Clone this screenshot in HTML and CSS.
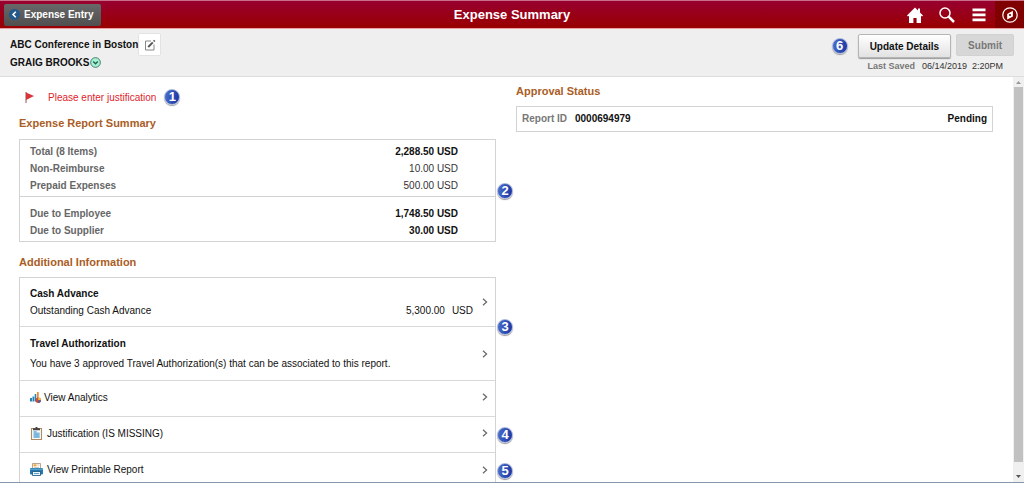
FILE: index.html
```html
<!DOCTYPE html>
<html lang="en">
<head>
<meta charset="utf-8">
<meta name="viewport" content="width=device-width, initial-scale=1">
<title>Expense Summary</title>
<link rel="stylesheet" href="styles.css">
</head>
<body>
<header class="banner">
  <button class="back" type="button">
    <svg class="back-icon" viewBox="0 0 12 12" aria-hidden="true"><circle cx="6" cy="6" r="6" fill="#24588a"/><path d="M7.4 3 4.4 6l3 3" fill="none" stroke="#fff" stroke-width="1.7"/></svg>
    Expense Entry
  </button>
  <h1 class="title">Expense Summary</h1>
  <nav class="tools">
    <button class="tool" type="button" aria-label="Home"><svg class="icon" viewBox="0 0 16 16"><path d="M8 .5 11 3.500V1.500h2v4L16 8.500l-1 1-1-.8V16H9.600v-5H6.400v5H2V8.700l-1 .8-1-1z" fill="#fff"/></svg></button>
    <button class="tool" type="button" aria-label="Search"><svg class="icon" viewBox="0 0 16 16" fill="none" stroke="#fff"><circle cx="6" cy="6" r="5" stroke-width="1.500"/><path d="m9.700 9.700 5.300 5.300" stroke-width="2.500"/></svg></button>
    <button class="tool" type="button" aria-label="Actions"><svg class="icon" viewBox="0 0 16 16"><path d="M1.500 1.500h13v2.700h-13zM1.500 6.500h13v2.700h-13zM1.500 11.500h13v2.700h-13z" fill="#fff"/></svg></button>
    <button class="tool tool-nav" type="button" aria-label="Navigator"><svg class="icon" viewBox="0 0 16 16"><circle cx="8" cy="8" r="7.200" fill="none" stroke="#fff" stroke-width="1.200"/><path d="M10.900 3.800v5.700L5.200 12.400V7z" fill="#fff"/><circle cx="8" cy="8" r="1.100" fill="#800000"/></svg></button>
  </nav>
</header>

<section class="subhead">
  <div class="who">
    <div class="who-row"><strong>ABC Conference in Boston</strong>
      <button class="edit" type="button" aria-label="Edit description"><svg class="edit-icon" viewBox="0 0 12 12" fill="none" stroke="#555"><path d="M7 2H1.500v9h8.500V5.500" stroke="#888"/><path d="m4.200 8 4.600-4.700" stroke-width="1.900"/><path d="m9.700 2.400 1-1" stroke-width="2"/></svg></button>
    </div>
    <div class="who-row who-name"><strong>GRAIG BROOKS</strong>
      <button class="more" type="button" aria-label="Related actions"><svg class="more-icon" viewBox="0 0 12 12"><circle cx="6" cy="6" r="5.300" fill="#a4f2d2" stroke="#3c7565" stroke-width="1"/><path d="M3.500 4.800 6 7.300l2.500-2.500" fill="none" stroke="#245f50" stroke-width="1.500"/></svg></button>
    </div>
  </div>
  <div class="actions">
    <div class="action-row">
      <span class="badge badge-action">6</span>
      <button class="btn" type="button">Update Details</button>
      <button class="btn btn-off" type="button" disabled>Submit</button>
    </div>
    <div class="saved"><span class="saved-label">Last Saved</span><span>06/14/2019&nbsp; 2:20PM</span></div>
  </div>
</section>

<div class="body">
  <main class="content">
    <div class="col">
      <div class="alert"><svg class="flag" viewBox="0 0 9 11"><path d="M1 0v11" stroke="#b07a7a" stroke-width="1.300"/><path d="m1 .5 8 3.600L1 8z" fill="#d8343a"/></svg><a class="alert-link" href="#justify">Please enter justification</a><span class="badge">1</span></div>
      <h2 class="heading heading-summary">Expense Report Summary</h2>
      <div class="panel">
        <dl class="totals">
          <div class="line"><dt>Total (8 Items)</dt><dd class="strong">2,288.50 USD</dd></div>
          <div class="line"><dt>Non-Reimburse</dt><dd>10.00 USD</dd></div>
          <div class="line"><dt>Prepaid Expenses</dt><dd>500.00 USD</dd></div>
        </dl>
        <dl class="totals totals-due">
          <div class="line"><dt>Due to Employee</dt><dd class="strong">1,748.50 USD</dd></div>
          <div class="line"><dt>Due to Supplier</dt><dd class="strong">30.00 USD</dd></div>
        </dl>
        <span class="badge badge-side">2</span>
      </div>

      <h2 class="heading heading-info">Additional Information</h2>
      <div class="panel">
        <a class="item item-cash" href="#cash">
          <span class="item-text"><strong>Cash Advance</strong><span class="amount-line"><span>Outstanding Cash Advance</span><span class="amount">5,300.00 <span>USD</span></span></span></span>
          <svg class="chev" viewBox="0 0 6 8"><path d="m1 .7 3.600 3.300L1 7.300"/></svg>
          <span class="badge badge-edge">3</span>
        </a>
        <a class="item item-travel" href="#travel">
          <span class="item-text item-text-wide"><strong>Travel Authorization</strong><span>You have 3 approved Travel Authorization(s) that can be associated to this report.</span></span>
          <svg class="chev" viewBox="0 0 6 8"><path d="m1 .7 3.600 3.300L1 7.300"/></svg>
        </a>
        <a class="item item-link" href="#analytics">
          <svg class="analytics" viewBox="0 0 11 11"><path d="M0 6h2v3.500H0zM2.500 4.500h1.700v5H2.500zM4.700 2h1.600v7.500H4.700z" fill="#2583ba"/><path d="M7 0h1.700v6H7z" fill="#f08b2b"/><circle cx="8.200" cy="8.200" r="2.700" fill="#c84d36"/><path d="M8.200 8.200V5.500a2.700 2.700 0 0 1 2.700 2.700z" fill="#f5b83d"/><path d="M8.200 8.200h2.700a2.700 2.700 0 0 1-2.700 2.700z" fill="#58569c"/></svg>
          <span>View Analytics</span>
          <svg class="chev" viewBox="0 0 6 8"><path d="m1 .7 3.600 3.300L1 7.300"/></svg>
        </a>
        <a class="item item-link" href="#justify">
          <svg class="doc" viewBox="0 0 13 13"><path d="M1.500 1.500h10v11h-10z" fill="#f7fafc" stroke="#b08a60" stroke-width="1.100"/><path d="M3.500 4h3.200v1.500h3V11H3.500z" fill="#83bce0"/><path d="M4.500 7.300h4M4.500 9.200h4" stroke="#6aa7d2" stroke-width=".6"/><path d="M3 1.200h2.200L5.800 0h1.400l.6 1.200H10v2H3z" fill="#444"/></svg>
          <span>Justification (IS MISSING)</span>
          <svg class="chev" viewBox="0 0 6 8"><path d="m1 .7 3.600 3.300L1 7.300"/></svg>
          <span class="badge badge-side">4</span>
        </a>
        <a class="item item-link" href="#print">
          <svg class="doc" viewBox="0 0 13 13"><path d="M2.500.5h8V6h-8z" fill="#fcfaf3" stroke="#a68d76" stroke-width=".8"/><path d="M3.500 1.300h3v2h-3z" fill="#efa43b"/><path d="M7.300 2h2M4 4.500h5" stroke="#b9b2a9" stroke-width=".7"/><rect y="5" width="13" height="6.500" rx="1" fill="#2478ae"/><path d="M0 6.200h13" stroke="#69b4de"/><path d="M2.500 8.500h8v4h-8z" fill="#e8f4fa" stroke="#174f78" stroke-width=".8"/><path d="M4 10.500h5" stroke="#5ea2cd"/></svg>
          <span>View Printable Report</span>
          <svg class="chev" viewBox="0 0 6 8"><path d="m1 .7 3.600 3.300L1 7.300"/></svg>
          <span class="badge badge-side">5</span>
        </a>
      </div>
    </div>

    <div class="col">
      <h2 class="heading heading-status">Approval Status</h2>
      <div class="panel status"><span class="status-label">Report ID</span><strong>0000694979</strong><strong class="state">Pending</strong></div>
    </div>
  </main>
  <div class="scroll" aria-hidden="true">
    <svg class="arrow" viewBox="0 0 5 3"><path d="M0 3 2.500 0 5 3z" fill="#999"/></svg>
    <div class="thumb"></div>
    <svg class="arrow" viewBox="0 0 5 3"><path d="M0 0h5L2.500 3z" fill="#555"/></svg>
  </div>
</div>
</body>
</html>
```
FILE: styles.css
```css
* { box-sizing: border-box; }
body {
  margin: 0;
  height: 100vh;
  display: flex;
  flex-direction: column;
  overflow: hidden;
  border-bottom: 1px solid #8496a8;
  background: #fff;
  color: #111;
  font: 10px/17px "Liberation Sans", Arial, sans-serif;
}
h1, h2, dl, dd { margin: 0; }
button { font: inherit; border: 0; padding: 0; background: none; cursor: pointer; }
a { color: inherit; text-decoration: none; }
svg { display: block; flex: none; }

.banner {
  flex: none;
  display: grid;
  grid-template-columns: 1fr auto 1fr;
  align-items: center;
  height: 29px;
  border-top: 1px solid #c77088;
  border-bottom: 1px solid #eaa0a0;
  background: linear-gradient(#980030, #990000);
  color: #fff;
}
.back {
  justify-self: start;
  display: flex;
  align-items: center;
  gap: 4px;
  height: 22px;
  margin-left: 4px;
  padding: 0 8px 0 5px;
  border-radius: 2px;
  background: linear-gradient(#686868, #4f4f4f);
  color: #fff;
  font-weight: bold;
}
.back-icon { width: 11px; height: 11px; }
.title { font-size: 13px; line-height: 26px; }
.tools { justify-self: end; align-self: stretch; display: flex; }
.tool { width: 32px; display: grid; place-items: center; }
.tool-nav { width: 29px; background: #800000; }
.icon { width: 16px; height: 16px; }

.subhead {
  flex: none;
  display: flex;
  justify-content: space-between;
  height: 48px;
  padding: 5px 10px 0;
  border-bottom: 1px solid #ddd;
  background: #efefef;
}
.who-row { display: flex; align-items: center; gap: 1px; height: 21px; }
.who-name { height: 15px; }
.edit {
  display: grid;
  place-items: center;
  width: 21px;
  height: 21px;
  background: #fff;
  box-shadow: 0 0 1px #aaa;
}
.edit-icon { width: 12px; height: 12px; }
.more-icon { width: 11px; height: 11px; }
.actions { display: flex; flex-direction: column; align-items: flex-end; }
.action-row { display: flex; gap: 5px; }
.btn {
  height: 24px;
  padding: 0 11px;
  border: 1px solid #b5b5b5;
  border-radius: 2px;
  background: linear-gradient(#fff, #e2e2e2);
  box-shadow: 0 1px 1px #999;
  color: #111;
  font-weight: bold;
}
.btn-off { height: 22px; border-color: #d2d2d2; background: #d7d7d7; box-shadow: none; color: #777; }
.saved { display: flex; gap: 7px; margin-right: 11px; color: #333; font-size: 9px; }
.saved-label { color: #777; font-weight: bold; }

.badge {
  flex: none;
  width: 16px;
  height: 16px;
  border: 1px solid #a9b5dc;
  border-radius: 50%;
  background: linear-gradient(100deg, #4c6fcb, #1835a3);
  box-shadow: 0 1px 1px #999;
  color: #fff;
  font-size: 13px;
  font-weight: bold;
  line-height: 14px;
  text-align: center;
}
.badge-action { margin: 4px 5px 0 0; }
.badge-side, .badge-edge { position: absolute; right: -18px; top: calc(50% - 8px); }
.badge-edge { top: calc(100% - 7px); }

.body { flex: 1; min-height: 0; display: flex; }
.content {
  flex: 1;
  display: grid;
  grid-template-columns: 1fr 1fr;
  gap: 20px;
  padding: 0 20px 0 19px;
  overflow: hidden;
}
.alert { display: flex; align-items: center; height: 20px; margin-top: 10px; padding-left: 6px; }
.flag { width: 9px; height: 11px; margin-right: 14px; }
.alert-link { margin-right: 8px; color: #e0242c; }
.heading { color: #aa5d25; font-size: 11px; line-height: 16px; }
.heading-summary { margin: 8px 0; }
.heading-info { margin: 12px 0 7px; }
.heading-status { margin: 6px 0 7px; }
.panel { position: relative; border: 1px solid #d3d3d3; }
.totals { padding: 3px 37px 2px 10px; }
.totals-due { padding-top: 8px; border-top: 1px solid #d3d3d3; }
.line { display: flex; justify-content: space-between; color: #333; }
dt { color: #666; font-weight: bold; }
.strong { color: #111; font-weight: bold; }

.item {
  position: relative;
  display: flex;
  align-items: center;
  padding: 0 7px 0 10px;
  border-bottom: 1px solid #d9d9d9;
}
.item:last-of-type { border-bottom: 0; }
.item-cash { height: 49px; }
.item-travel { height: 54px; }
.item-link { height: 36px; padding-bottom: 3px; }
.item-text { flex: 1; display: flex; flex-direction: column; }
.item-text-wide { gap: 3px; }
.amount-line { display: flex; justify-content: space-between; padding-right: 9px; }
.amount { display: flex; gap: 7px; }
.analytics { width: 11px; height: 11px; margin-right: 3px; }
.doc { width: 13px; height: 13px; margin-right: 4px; }
.chev { width: 6px; height: 8px; margin-left: auto; fill: none; stroke: #666; stroke-width: 1.2; }

.status { display: flex; gap: 8px; padding: 3px 5px 4px 5px; }
.status-label { color: #777; -webkit-text-stroke: 0; font-weight: bold; }
.state { margin-left: auto; }

.scroll {
  flex: none;
  width: 11px;
  display: flex;
  flex-direction: column;
  align-items: center;
  gap: 3px;
  padding: 4px 1px;
  background: #f0f0f0;
}
.thumb { width: 9px; height: 375px; margin-bottom: auto; background: #c1c1c1; }
.arrow { width: 5px; height: 3px; }
```
